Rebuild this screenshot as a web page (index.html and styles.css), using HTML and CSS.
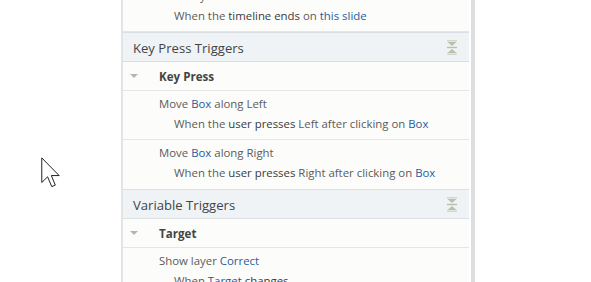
FILE: index.html
```html
<!DOCTYPE html>
<html>
<head>
<meta charset="utf-8">
<link rel="stylesheet" href="styles.css">
</head>
<body>
<div class="stage">
  <svg class="cursor" width="20" height="31" viewBox="0 0 13 20" xmlns="http://www.w3.org/2000/svg">
    <path d="M0.5 0.5 L0.5 16.5 L4.3 12.8 L7 19.2 L9.3 18.2 L6.7 12 L11.8 12 Z" fill="#fff" stroke="#222" stroke-width="0.65" stroke-linejoin="miter"/>
  </svg>
  <div class="panel">
    <div class="list">
      <div class="item">
        <div class="l1">Show layer <span class="obj">Time Out</span></div>
        <div class="l2">When the <span class="ev">timeline ends</span> on <span class="obj">this slide</span></div>
      </div>

      <div class="section">
        <div class="sec-head">
          <span>Key Press Triggers</span>
          <svg class="collapse" width="10" height="15" viewBox="0 0 10 15"><rect x="0" y="0" width="10" height="1.5" fill="#d3d8c8"/><path d="M0.5 2 L9.5 2 L5 6 Z" fill="#b9c0ab"/><rect x="0" y="6.8" width="10" height="1.4" fill="#b9c0ab"/><path d="M0.5 13 L9.5 13 L5 9 Z" fill="#b9c0ab"/><rect x="0" y="13.5" width="10" height="1.5" fill="#d3d8c8"/></svg>
        </div>
        <div class="group"><span class="tri"></span><span class="gname">Key Press</span></div>
        <div class="item">
          <div class="l1">Move <span class="obj">Box</span> along Left</div>
          <div class="l2">When the <span class="ev">user presses</span> Left after clicking on <span class="obj">Box</span></div>
        </div>
        <div class="item">
          <div class="l1">Move <span class="obj">Box</span> along Right</div>
          <div class="l2">When the <span class="ev">user presses</span> Right after clicking on <span class="obj">Box</span></div>
        </div>
      </div>

      <div class="section">
        <div class="sec-head">
          <span>Variable Triggers</span>
          <svg class="collapse" width="10" height="15" viewBox="0 0 10 15"><rect x="0" y="0" width="10" height="1.5" fill="#d3d8c8"/><path d="M0.5 2 L9.5 2 L5 6 Z" fill="#b9c0ab"/><rect x="0" y="6.8" width="10" height="1.4" fill="#b9c0ab"/><path d="M0.5 13 L9.5 13 L5 9 Z" fill="#b9c0ab"/><rect x="0" y="13.5" width="10" height="1.5" fill="#d3d8c8"/></svg>
        </div>
        <div class="group"><span class="tri"></span><span class="gname">Target</span></div>
        <div class="item">
          <div class="l1">Show layer <span class="obj">Correct</span></div>
          <div class="l2">When <span class="obj">Target</span> <span class="ev">changes</span></div>
        </div>
      </div>
    </div>
    <div class="scroll"></div>
  </div>
</div>
</body>
</html>
```

FILE: styles.css
```css
html, body {
  margin: 0;
  padding: 0;
  background: #ffffff;
  overflow: hidden;
}
body {
  font-family: "Open Sans", "Noto Sans", sans-serif;
  font-size: 11.4px;
  color: #5b5b5b;
}
.stage {
  position: relative;
  width: 591px;
  height: 282px;
  overflow: hidden;
}
.cursor {
  position: absolute;
  left: 41px;
  top: 157px;
}
.panel {
  margin-left: 121px;
  display: flex;
  width: 354px;
  height: 282px;
}
.list {
  width: 346px;
  border-left: 2px solid #e4e4e4;
  background: #fcfcfa;
  margin-top: -17px;
}
.scroll {
  width: 4px;
  margin-left: 2px;
  background: #dedede;
}
.item {
  padding: 3px 0 5px 0;
  border-bottom: 1px solid #e6e6e4;
  line-height: 20px;
  white-space: nowrap;
}
.item:last-child {
  border-bottom: none;
  padding-bottom: 6px;
}
.l1 { padding-left: 36px; }
.l2 { padding-left: 51px; }
.obj { color: #1f5d9c; }
.ev { color: #3a3a3a; }
.sec-head {
  height: 28px;
  border-top: 1px solid #dadfe4;
  border-bottom: 1px solid #dadfe4;
  background: #eff3f6;
  display: flex;
  align-items: center;
  justify-content: space-between;
  padding: 0 12px 0 10px;
  font-size: 13.1px;
  font-weight: 400;
  color: #444444;
}
.sec-head span { padding-top: 1px; }
.collapse { display: block; }
.group {
  height: 28px;
  border-bottom: 1px solid #e6e6e4;
  display: flex;
  align-items: center;
}
.tri {
  width: 0;
  height: 0;
  margin-left: 7px;
  border-left: 4px solid transparent;
  border-right: 4px solid transparent;
  border-top: 4px solid #b4b4b0;
}
.gname {
  margin-left: 21px;
  font-size: 11.6px;
  font-weight: 700;
  color: #444444;
}
```
